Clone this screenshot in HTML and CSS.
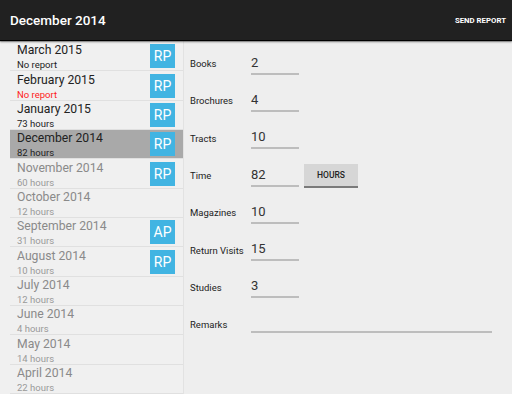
FILE: index.html
```html
<!DOCTYPE html>
<html lang="en">
<head>
  <meta charset="UTF-8">
  <title>December 2014</title>
  <link rel="stylesheet" href="styles.css">
</head>
<body>

<header class="appbar">
  <h1>December 2014</h1>
  <span class="action">SEND REPORT</span>
</header>

<div class="main">
  <ul class="months">
    <li class="month"><div class="info"><div class="name">March 2015</div><div class="sub">No report</div></div><span class="badge">RP</span></li>
    <li class="month"><div class="info"><div class="name">February 2015</div><div class="sub missing">No report</div></div><span class="badge">RP</span></li>
    <li class="month"><div class="info"><div class="name">January 2015</div><div class="sub">73 hours</div></div><span class="badge">RP</span></li>
    <li class="month selected"><div class="info"><div class="name">December 2014</div><div class="sub">82 hours</div></div><span class="badge">RP</span></li>
    <li class="month past"><div class="info"><div class="name">November 2014</div><div class="sub">60 hours</div></div><span class="badge">RP</span></li>
    <li class="month past"><div class="info"><div class="name">October 2014</div><div class="sub">12 hours</div></div></li>
    <li class="month past"><div class="info"><div class="name">September 2014</div><div class="sub">31 hours</div></div><span class="badge">AP</span></li>
    <li class="month past"><div class="info"><div class="name">August 2014</div><div class="sub">10 hours</div></div><span class="badge">RP</span></li>
    <li class="month past"><div class="info"><div class="name">July 2014</div><div class="sub">12 hours</div></div></li>
    <li class="month past"><div class="info"><div class="name">June 2014</div><div class="sub">4 hours</div></div></li>
    <li class="month past"><div class="info"><div class="name">May 2014</div><div class="sub">14 hours</div></div></li>
    <li class="month past"><div class="info"><div class="name">April 2014</div><div class="sub">22 hours</div></div></li>
  </ul>

  <form class="report">
    <div class="field"><label>Books</label><span class="input">2</span></div>
    <div class="field"><label>Brochures</label><span class="input">4</span></div>
    <div class="field"><label>Tracts</label><span class="input">10</span></div>
    <div class="field"><label>Time</label><span class="input">82</span><button type="button" class="unit">HOURS</button></div>
    <div class="field"><label>Magazines</label><span class="input">10</span></div>
    <div class="field"><label>Return Visits</label><span class="input">15</span></div>
    <div class="field"><label>Studies</label><span class="input">3</span></div>
    <div class="field"><label>Remarks</label><span class="input wide"></span></div>
  </form>
</div>

</body>
</html>
```

FILE: styles.css
```css
body {
  margin: 0;
  font-family: Roboto, 'Liberation Sans', sans-serif;
  background: #eeeeee;
  color: #222;
  width: 512px;
  height: 394px;
  overflow: hidden;
}
.appbar {
  height: 40px;
  background: #212121;
  display: flex;
  align-items: center;
  justify-content: space-between;
  padding: 0 6px 0 10px;
  box-shadow: 0 1px 1px #000, 0 2px 2px rgba(0, 0, 0, 0.4);
  position: relative;
  z-index: 1;
}
.appbar h1 {
  margin: 0;
  color: #fff;
  font-size: 13.5px;
  font-weight: 500;
}
.appbar .action {
  color: #fff;
  font-size: 7.8px;
  font-weight: 700;
}
.main {
  display: flex;
  height: 354px;
}
.months {
  list-style: none;
  margin: 0;
  padding: 2px 0 0 10px;
  width: 173px;
  background: #f0f0f0;
  border-right: 1px solid #e2e2e2;
}
.month {
  height: 28.35px;
  display: flex;
  align-items: center;
  justify-content: space-between;
  padding: 0 8px 0 7px;
  border-bottom: 1px solid #e0e0e0;
}
.month .info {
  padding-top: 2px;
}
.month .name {
  font-size: 12.2px;
  line-height: 15px;
}
.month .sub {
  font-size: 9.5px;
  line-height: 13px;
}
.month .sub.missing {
  color: #ff1a1a;
}
.month.selected {
  background: #a9a9a9;
}
.month.past .name {
  color: #8a8a8a;
}
.month.past .sub {
  color: #999;
}
.badge {
  width: 25px;
  height: 24px;
  background: #41b4e2;
  color: #fff;
  font-size: 14px;
  display: flex;
  align-items: center;
  justify-content: center;
}
.report {
  flex: 1;
  padding: 5px 0 0 6px;
}
.field {
  height: 37.3px;
  display: flex;
  align-items: center;
}
.field label {
  width: 61px;
  font-size: 9.5px;
}
.input {
  width: 48px;
  height: 17px;
  font-size: 13px;
  line-height: 14px;
  color: #333;
  border-bottom: 2px solid #bdbdbd;
  margin-top: 3px;
}
.input.wide {
  width: 241px;
  height: 10px;
  margin-top: 5px;
}
.unit {
  margin-left: 5px;
  width: 54px;
  height: 24px;
  background: #d6d6d6;
  border: none;
  border-bottom: 2px solid #7a7a7a;
  font-family: inherit;
  font-size: 8.5px;
  font-weight: 500;
  color: #222;
  padding: 0;
}
```
